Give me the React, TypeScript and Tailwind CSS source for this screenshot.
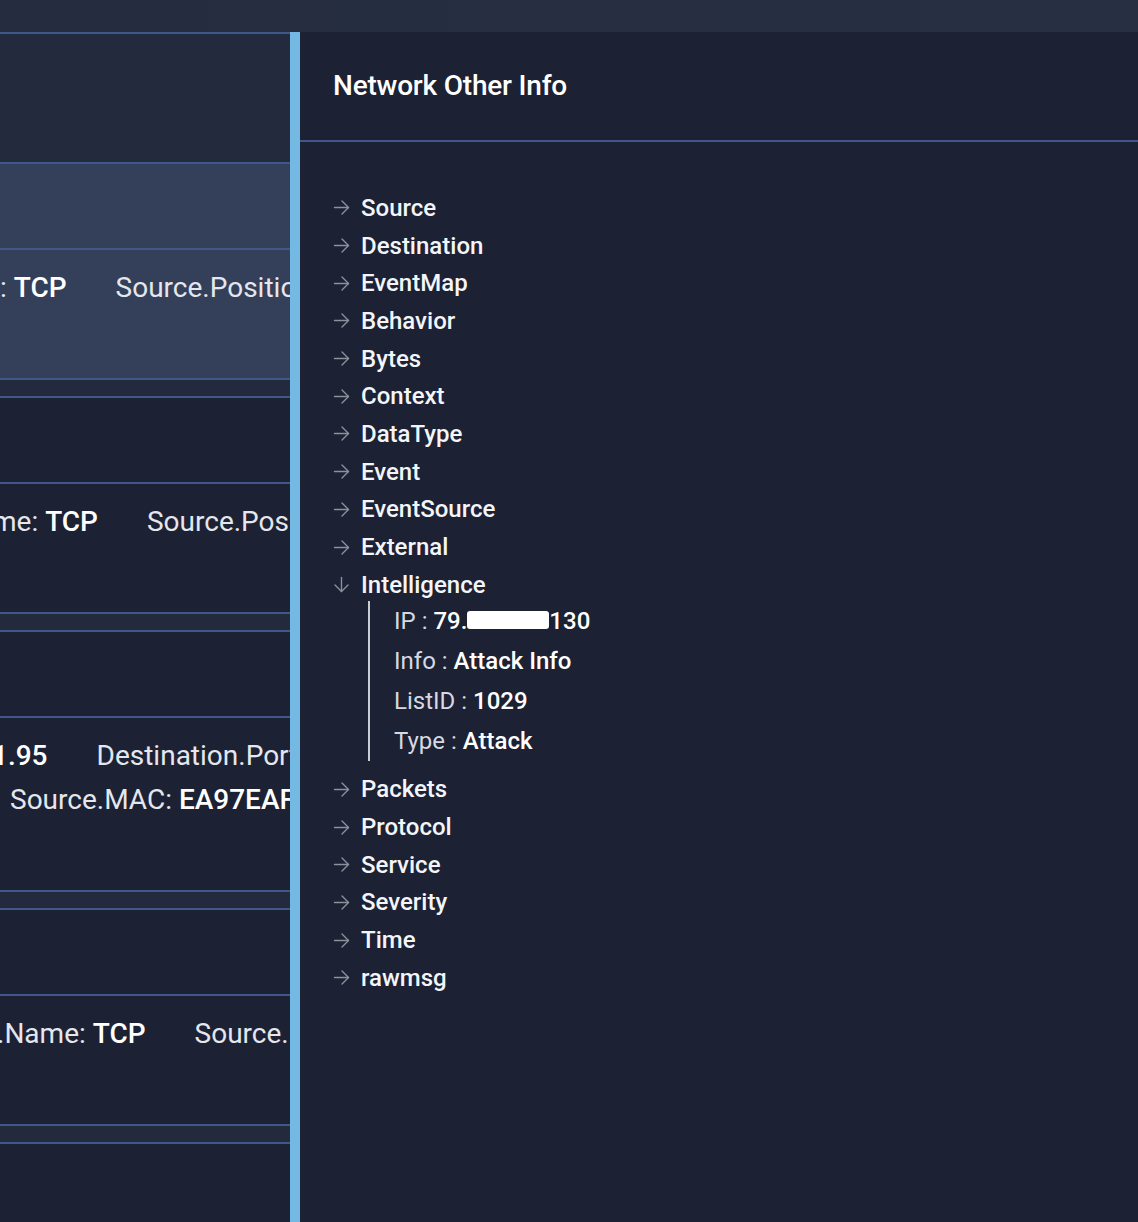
import React from "react";

const LINE = "bg-[#40578a]";

function Arrow({ down = false }: { down?: boolean }) {
  return (
    <svg
      width="17"
      height="17"
      viewBox="0 0 17 17"
      fill="none"
      stroke="#8d919c"
      strokeWidth="1.4"
      strokeLinecap="round"
      strokeLinejoin="round"
      className={down ? "rotate-90 shrink-0" : "shrink-0"}
    >
      <path d="M1.5 8.5H15.5" />
      <path d="M9 2L15.5 8.5L9 15" />
    </svg>
  );
}

function HLine() {
  return <div className={`h-[2px] shrink-0 ${LINE}`} />;
}

function Field({ k, v, gap = true }: { k: string; v: string; gap?: boolean }) {
  return (
    <span className={`whitespace-nowrap ${gap ? "mr-[49px]" : ""}`}>
      <span className="font-normal text-[#e4e7ee]">{k}</span>
      <span className="font-medium text-white">{v}</span>
    </span>
  );
}

function Body({ h, children }: { h: string; children: React.ReactNode }) {
  return (
    <div className={`${h} shrink-0 overflow-hidden pt-[16px] text-[28px] leading-[44px]`}>
      {children}
    </div>
  );
}

const items1 = [
  "Source",
  "Destination",
  "EventMap",
  "Behavior",
  "Bytes",
  "Context",
  "DataType",
  "Event",
  "EventSource",
  "External",
];
const items2 = ["Packets", "Protocol", "Service", "Severity", "Time", "rawmsg"];

function Item({ label, down = false }: { label: string; down?: boolean }) {
  return (
    <div className="flex h-[37.7px] items-center gap-[11px]">
      <Arrow down={down} />
      <span className="text-[24px] font-medium text-[#f3f5f9]">{label}</span>
    </div>
  );
}

function Child({ k, children }: { k: string; children: React.ReactNode }) {
  return (
    <div className="flex h-[40px] items-center whitespace-nowrap text-[24px]">
      <span className="font-normal text-[#d6d9e1]">{k}&nbsp;:&nbsp;</span>
      <span className="font-medium text-white">{children}</span>
    </div>
  );
}

export default function App() {
  return (
    <div
      className="flex h-[1222px] w-[1138px] flex-col overflow-hidden bg-[#1c2133]"
      style={{ fontFamily: "Roboto, 'Noto Sans', sans-serif" }}
    >
      <div className="h-[32px] shrink-0 bg-gradient-to-r from-[#252c3f] to-[#272f43]" />
      <div className="flex min-h-0 flex-1">
        {/* left list */}
        <div className="flex w-[290px] shrink-0 flex-col overflow-hidden">
          <HLine />
          <div className="h-[128px] shrink-0 bg-[#232a3d]" />
          <HLine />
          <div className="flex shrink-0 flex-col bg-[#343f59]">
            <div className="h-[84px]" />
            <HLine />
            <Body h="h-[128px]">
              <div className="flex whitespace-nowrap">
                <Field k=": " v="TCP" />
                <Field k="Source.Position" v="" gap={false} />
              </div>
            </Body>
          </div>
          <HLine />
          <div className="h-[16px] shrink-0 bg-[#232a3d]" />
          <HLine />
          <div className="h-[84px] shrink-0" />
          <HLine />
          <Body h="h-[128px]">
            <div className="-ml-[8px] flex whitespace-nowrap">
              <Field k="me: " v="TCP" />
              <Field k="Source.Position" v="" gap={false} />
            </div>
          </Body>
          <HLine />
          <div className="h-[16px] shrink-0 bg-[#232a3d]" />
          <HLine />
          <div className="h-[84px] shrink-0" />
          <HLine />
          <Body h="h-[172px]">
            <div className="-ml-[8px] flex whitespace-nowrap">
              <Field k="" v="1.95" />
              <Field k="Destination.Port" v="" gap={false} />
            </div>
            <div className="flex whitespace-nowrap pl-[10px]">
              <Field k="Source.MAC: " v="EA97EAF0" gap={false} />
            </div>
          </Body>
          <HLine />
          <div className="h-[16px] shrink-0 bg-[#232a3d]" />
          <HLine />
          <div className="h-[84px] shrink-0" />
          <HLine />
          <Body h="h-[128px]">
            <div className="-ml-[3px] flex whitespace-nowrap">
              <Field k=".Name: " v="TCP" />
              <Field k="Source.Position" v="" gap={false} />
            </div>
          </Body>
          <HLine />
          <div className="h-[16px] shrink-0 bg-[#232a3d]" />
          <HLine />
          <div className="flex-1" />
        </div>

        {/* divider bar */}
        <div className="w-[10px] shrink-0 bg-[#74b8e4]" />

        {/* right panel */}
        <div className="flex min-w-0 flex-1 flex-col bg-[#1c2133]">
          <div className="flex h-[108px] shrink-0 items-center px-[33px]">
            <h1 className="text-[28px] font-medium tracking-[-0.2px] text-white">
              Network Other Info
            </h1>
          </div>
          <div className={`h-[2px] ${LINE}`} />
          <div className="flex flex-col px-[33px] pt-[47px]">
            {items1.map((l) => (
              <Item key={l} label={l} />
            ))}
            <Item label="Intelligence" down />
            <div className="-mt-[3px] mb-[10px] ml-[35px] border-l-2 border-[#c9ccd4] pl-[24px]">
              <Child k="IP">
                79.
                <span className="inline-block h-[18px] w-[82px] rounded-[3px] bg-white" />
                130
              </Child>
              <Child k="Info">Attack Info</Child>
              <Child k="ListID">1029</Child>
              <Child k="Type">Attack</Child>
            </div>
            {items2.map((l) => (
              <Item key={l} label={l} />
            ))}
          </div>
        </div>
      </div>
    </div>
  );
}
